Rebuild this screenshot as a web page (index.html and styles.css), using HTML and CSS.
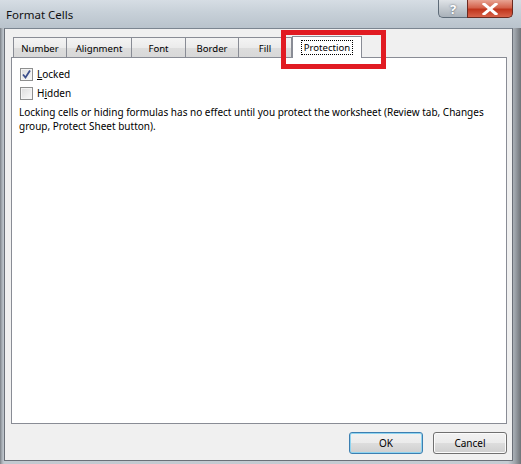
FILE: index.html
```html
<!DOCTYPE html>
<html>
<head>
<meta charset="utf-8">
<link rel="stylesheet" href="styles.css">
</head>
<body>
<div class="window">
  <div class="titlebar">
    <span class="title">Format Cells</span>
    <div class="caption-btns">
      <div class="cap help">?</div>
      <div class="cap close">
        <svg width="16" height="12" viewBox="0 0 16 12"><path d="M2 1 L14 11 M14 1 L2 11" stroke="#fff" stroke-width="3" stroke-linecap="square"/></svg>
      </div>
    </div>
  </div>
  <div class="frame">
    <div class="client">
      <div class="tabs">
        <div class="tab w-number">Number</div>
        <div class="tab w-align">Alignment</div>
        <div class="tab w-font">Font</div>
        <div class="tab w-border">Border</div>
        <div class="tab w-fill">Fill</div>
        <div class="tab selected"><span class="focus">Protection</span></div>
      </div>
      <div class="panel">
        <label class="check"><span class="box checked"><svg width="11" height="11" viewBox="0 0 11 11"><path d="M2 5.5 L4.5 8.5 L9 1.5" fill="none" stroke="#3c4f8c" stroke-width="1.8"/></svg></span><span><u>L</u>ocked</span></label>
        <label class="check"><span class="box"></span><span>H<u>i</u>dden</span></label>
        <p class="desc">Locking cells or hiding formulas has no effect until you protect the worksheet (Review tab, Changes<br>group, Protect Sheet button).</p>
      </div>
      <div class="buttons">
        <div class="btn default">OK</div>
        <div class="btn">Cancel</div>
      </div>
    </div>
  </div>
  <div class="highlight"></div>
</div>
</body>
</html>
```

FILE: styles.css
```css
html, body {
  margin: 0;
  padding: 0;
}
body {
  width: 521px;
  height: 464px;
  overflow: hidden;
  font-family: "Noto Sans", "Liberation Sans", sans-serif;
  font-size: 10px;
  color: #000;
}
.window {
  position: relative;
  width: 521px;
  height: 464px;
  display: flex;
  flex-direction: column;
  background: linear-gradient(90deg, #7a7f85 0px, #a9b0b7 2px, #c2c9d0 4px, #c5ccd3 508px, #9ea4aa 515px, #6f7378 521px);
}
.titlebar {
  height: 28px;
  display: flex;
  align-items: flex-start;
  justify-content: space-between;
  background: linear-gradient(180deg, #d6dde4 0%, #c7d0d8 45%, #b9c3cc 100%);
}
.title {
  margin: 7px 0 0 6px;
  font-family: "Noto Sans", sans-serif;
  font-size: 11.5px;
  color: #111;
}
.caption-btns {
  display: flex;
  margin-right: 8px;
}
.cap {
  height: 18px;
  box-sizing: border-box;
  border: 1px solid #5e6b78;
  border-top: none;
  display: flex;
  align-items: center;
  justify-content: center;
}
.help {
  width: 29px;
  border-radius: 0 0 0 5px;
  background: linear-gradient(180deg, #dfe3e7 0%, #c3c9cf 50%, #a9b1b9 100%);
  color: #fff;
  font-weight: bold;
  font-size: 13px;
  text-shadow: 0 0 2px #4a5560;
  border-right: none;
}
.close {
  width: 46px;
  border-radius: 0 0 5px 0;
  background: linear-gradient(180deg, #e8a493 0%, #d4634c 45%, #c0351c 55%, #d8634a 100%);
  border-color: #6b2a20;
}
.frame {
  flex: 1;
  padding: 0 8px 3px 4px;
  display: flex;
  min-width: 0;
}
.client {
  flex: 1;
  min-width: 0;
  background: #f0f0f0;
  border-top: 1px solid #7b8590;
  border-left: 1px solid #6b7078;
  border-right: 1px solid #6b7078;
  border-bottom: 1px solid #6b7078;
  display: flex;
  flex-direction: column;
}
.tabs {
  display: flex;
  align-items: flex-end;
  padding: 8px 0 0 8px;
  height: 20px;
  position: relative;
  z-index: 1;
  font-size: 9.6px;
}
.tab {
  box-sizing: border-box;
  height: 20px;
  border: 1px solid #898c95;
  border-bottom: none;
  border-right: none;
  background: linear-gradient(180deg, #f4f4f4 0%, #ebebeb 50%, #dddddd 51%, #d8d8d8 100%);
  display: flex;
  align-items: center;
  justify-content: center;
  padding-top: 1px;
}
.w-number { width: 53px; }
.w-align { width: 65px; }
.w-font { width: 54px; }
.w-border { width: 53px; }
.w-fill { width: 54px; border-right: 1px solid #898c95; }
.tab.selected {
  width: 70px;
  height: 22px;
  margin-bottom: -1px;
  background: #fff;
  border-right: 1px solid #898c95;
  padding-top: 0;
  align-items: flex-start;
}
.focus {
  margin-top: 3px;
  border: 1px dotted #000;
  padding: 0 2px;
  line-height: 13px;
}
.panel {
  margin: 0 5px 0 6px;
  height: 367px;
  box-sizing: border-box;
  background: #fff;
  border: 1px solid #898c95;
  padding: 9px 0 0 7px;
  overflow: hidden;
}
.check {
  display: flex;
  align-items: center;
  gap: 4px;
  height: 14px;
  margin: 0 0 5px 1px;
}
.box {
  width: 11px;
  height: 11px;
  border: 1px solid #8e8f8f;
  background: linear-gradient(135deg, #dcdcdc 0%, #f4f4f4 80%, #fdfdfd 100%);
  display: flex;
  align-items: center;
  justify-content: center;
  box-shadow: inset 0 0 0 1px #f4f4f4;
}
.box svg { display: block; }
.desc {
  margin: 3px 0 0 0;
  line-height: 14px;
  white-space: nowrap;
}
.buttons {
  display: flex;
  justify-content: flex-end;
  gap: 10px;
  padding: 8px 5px 0 0;
}
.btn {
  width: 74px;
  height: 22px;
  box-sizing: border-box;
  border: 1px solid #707070;
  border-radius: 3px;
  background: linear-gradient(180deg, #f2f2f2 0%, #ebebeb 50%, #dddddd 51%, #cfcfcf 100%);
  display: flex;
  align-items: center;
  justify-content: center;
  box-shadow: inset 0 0 0 1px #fbfbfb;
}
.btn.default {
  border-color: #3c7fb1;
  box-shadow: inset 0 0 0 1px #8fd4f0;
}
.highlight {
  position: absolute;
  left: 281px;
  top: 30px;
  width: 105px;
  height: 39px;
  box-sizing: border-box;
  border: 5px solid #e11b22;
  z-index: 5;
}
```
